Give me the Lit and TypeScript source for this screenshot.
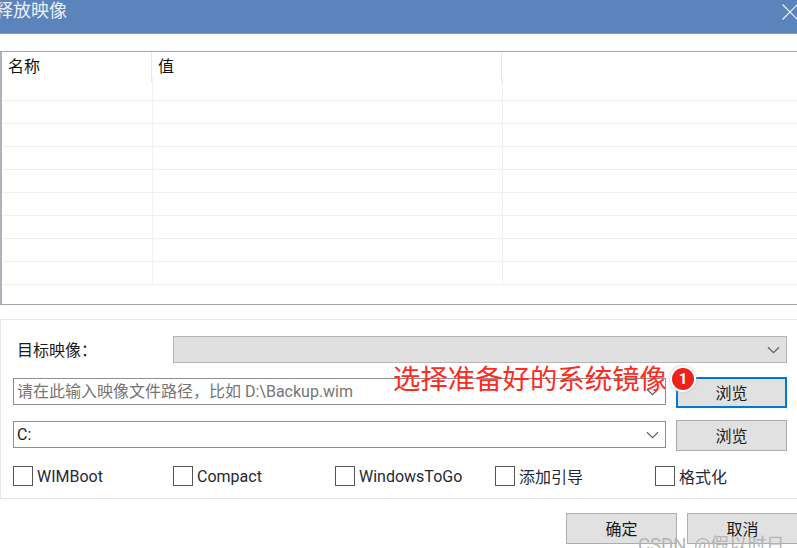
import { LitElement, html, css, svg } from "lit";
import { customElement } from "lit/decorators.js";

const chevron = svg`<svg class="chev" width="13" height="8" viewBox="0 0 13 8"><path d="M1 1.2 L6.5 6.6 L12 1.2" fill="none" stroke="#606060" stroke-width="1.2"/></svg>`;

@customElement("app-root")
export class AppRoot extends LitElement {
  static styles = css`
    :host {
      display: block;
      width: 797px;
      height: 548px;
      overflow: hidden;
      position: relative;
      background: #fff;
      color: #1a1a1a;
      font-family: Roboto, "Noto Sans CJK SC", sans-serif;
      font-size: 16px;
    }
    .title {
      height: 34px;
      box-sizing: border-box;
      background: #5b84bc;
      border-bottom: 1px solid #7a9ccb;
      color: #f2f5fa;
      display: flex;
      align-items: center;
      justify-content: space-between;
      padding: 0 0 12px 0;
    }
    .title span {
      font-size: 18px;
      line-height: 22px;
      margin-left: -5px;
      opacity: 0.95;
    }
    .title svg {
      margin-right: -1px;
      margin-top: 3px;
    }
    .table {
      margin-top: 17px;
      height: 254px;
      box-sizing: border-box;
      border-style: solid;
      border-color: #a2a4ae;
      border-width: 1px 0 1px 2px;
      border-left-color: #aeb0ba;
      overflow: hidden;
    }
    .row {
      display: grid;
      grid-template-columns: 151px 350px 1fr;
      height: 23px;
      box-sizing: border-box;
      border-bottom: 1px solid #f0f0f0;
    }
    .row > div {
      border-right: 1px solid #f0f0f0;
    }
    .row > div:last-child {
      border-right: 0;
    }
    .row.head {
      height: 26px;
      border-bottom: 0;
      grid-template-columns: 150px 350px 1fr;
    }
    .row.head > div {
      line-height: 30px;
      padding-left: 6px;
      border-right-color: #e8e8e8;
      color: #111;
    }
    .group {
      margin-top: 14px;
      height: 180px;
      box-sizing: border-box;
      border: 1px solid #e6e6e6;
      border-right: 0;
      padding: 16px 10px 0 12px;
      display: flex;
      flex-direction: column;
    }
    .line {
      display: flex;
      align-items: flex-start;
      height: 27px;
    }
    .label {
      width: 160px;
      padding-left: 4px;
      box-sizing: border-box;
      line-height: 29px;
    }
    .field {
      box-sizing: border-box;
      height: 27px;
      border: 1px solid #8f8f8f;
      background: #fff;
      display: flex;
      align-items: center;
      justify-content: space-between;
      padding: 0 6px 0 3px;
      width: 653px;
      line-height: 25px;
      white-space: nowrap;
    }
    .field.disabled {
      flex: 1;
      width: auto;
      background: #e0e0e0;
      border-color: #b4b4b4;
    }
    .field.ph {
      color: #757575;
    }
    .btn {
      box-sizing: border-box;
      width: 111px;
      height: 31px;
      padding-bottom: 2px;
      background: #e1e1e1;
      border: 1px solid #adadad;
      display: flex;
      align-items: center;
      justify-content: center;
      color: #1a1a1a;
      flex: none;
    }
    .btn.focus {
      border: 2px solid #0078d7;
    }
    .ml {
      margin-left: 10px;
      margin-top: -1px;
    }
    .l2 {
      margin-top: 15px;
    }
    .l3 {
      margin-top: 16px;
    }
    .checks {
      display: grid;
      grid-template-columns: 160px 162px 160px 160px 1fr;
      margin-top: 18px;
    }
    .check {
      display: flex;
      align-items: center;
      gap: 4px;
      height: 20px;
      white-space: nowrap;
      color: #1f2937;
    }
    .box {
      box-sizing: border-box;
      width: 20px;
      height: 20px;
      border: 1px solid #555;
      background: #fff;
      flex: none;
    }
    .footer {
      display: flex;
      justify-content: flex-end;
      gap: 10px;
      margin-top: 14px;
      margin-right: -1px;
    }
    .watermark {
      position: absolute;
      left: 638px;
      top: 533px;
      font-size: 18.5px;
      word-spacing: 3px;
      color: #b4b4b4;
      white-space: nowrap;
      line-height: 24px;
    }
    .note {
      position: absolute;
      left: 393px;
      top: 358px;
      font-size: 27.4px;
      line-height: 38px;
      color: #ff2a20;
      white-space: nowrap;
      font-family: "Noto Sans CJK SC", sans-serif;
    }
    .badge {
      position: absolute;
      left: 672px;
      top: 368px;
      width: 22px;
      height: 22px;
      border-radius: 50%;
      background: #f0201c;
      box-shadow: 0 0 0 2px #fff, 0 0 3px 2px #bbb;
      color: #fff;
      font-size: 15px;
      font-weight: 700;
      line-height: 22px;
      text-align: center;
    }
  `;

  render() {
    const rows = Array.from({ length: 9 });
    return html`
      <div class="title">
        <span>释放映像</span>
        <svg width="16" height="16" viewBox="0 0 16 16"><path d="M0.5 0.5 L15.5 15.5 M15.5 0.5 L0.5 15.5" stroke="#eef2f8" stroke-width="1.2" fill="none"/></svg>
      </div>
      <div class="table">
        <div class="row head"><div>名称</div><div>值</div><div></div></div>
        ${rows.map(() => html`<div class="row"><div></div><div></div><div></div></div>`)}
      </div>
      <div class="group">
        <div class="line">
          <div class="label">目标映像：</div>
          <div class="field disabled"><span></span>${chevron}</div>
        </div>
        <div class="line l2">
          <div class="field ph"><span>请在此输入映像文件路径，比如 D:\\Backup.wim</span>${chevron}</div>
          <div class="btn focus ml">浏览</div>
        </div>
        <div class="line l3">
          <div class="field"><span>C:</span>${chevron}</div>
          <div class="btn ml">浏览</div>
        </div>
        <div class="checks">
          <div class="check"><span class="box"></span>WIMBoot</div>
          <div class="check"><span class="box"></span>Compact</div>
          <div class="check"><span class="box"></span>WindowsToGo</div>
          <div class="check"><span class="box"></span>添加引导</div>
          <div class="check"><span class="box"></span>格式化</div>
        </div>
      </div>
      <div class="footer">
        <div class="btn">确定</div>
        <div class="btn">取消</div>
      </div>
      <div class="note">选择准备好的系统镜像</div>
      <div class="badge">1</div>
      <div class="watermark">CSDN @假以时日 丨</div>
    `;
  }
}
